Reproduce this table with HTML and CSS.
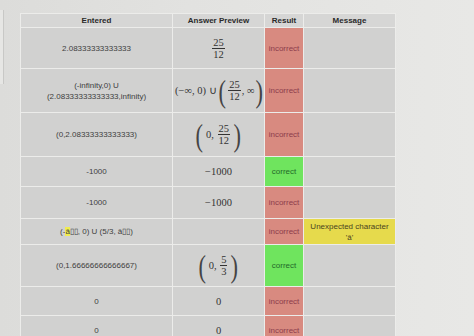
FILE: index.html
```html
<!DOCTYPE html>
<html>
<head>
<meta charset="utf-8">
<link rel="stylesheet" href="styles.css">
</head>
<body>
<div class="page">
  <div class="side-panel"></div>
  <table class="answers">
    <colgroup>
      <col class="c-entered"><col class="c-preview"><col class="c-result"><col class="c-message">
    </colgroup>
    <thead>
      <tr class="head"><th>Entered</th><th>Answer Preview</th><th>Result</th><th>Message</th></tr>
    </thead>
    <tbody>
      <tr class="r1">
        <td>2.08333333333333</td>
        <td class="math"><span class="frac"><span>25</span><span class="den">12</span></span></td>
        <td class="bad">incorrect</td><td></td>
      </tr>
      <tr class="r2">
        <td>(-infinity,0) U<br>(2.08333333333333,infinity)</td>
        <td class="math"><span class="row">(−∞, 0) ∪ <span class="big">(</span><span class="frac"><span>25</span><span class="den">12</span></span>, ∞<span class="big">)</span></span></td>
        <td class="bad">incorrect</td><td></td>
      </tr>
      <tr class="r3">
        <td>(0,2.08333333333333)</td>
        <td class="math"><span class="row"><span class="big">(</span>0,&nbsp;<span class="frac"><span>25</span><span class="den">12</span></span><span class="big">)</span></span></td>
        <td class="bad">incorrect</td><td></td>
      </tr>
      <tr class="r4">
        <td>-1000</td>
        <td class="math">−1000</td>
        <td class="good">correct</td><td></td>
      </tr>
      <tr class="r5">
        <td>-1000</td>
        <td class="math">−1000</td>
        <td class="bad">incorrect</td><td></td>
      </tr>
      <tr class="r6">
        <td>(-<span class="hl">â</span>▯▯, 0) U (5/3, â▯▯)</td>
        <td class="math"></td>
        <td class="bad">incorrect</td>
        <td class="warn">Unexpected character<br>'â'</td>
      </tr>
      <tr class="r7">
        <td>(0,1.66666666666667)</td>
        <td class="math"><span class="row"><span class="big">(</span>0,&nbsp;<span class="frac"><span>5</span><span class="den">3</span></span><span class="big">)</span></span></td>
        <td class="good">correct</td><td></td>
      </tr>
      <tr class="r8">
        <td>0</td>
        <td class="math">0</td>
        <td class="bad">incorrect</td><td></td>
      </tr>
      <tr class="r9">
        <td>0</td>
        <td class="math">0</td>
        <td class="bad">incorrect</td><td></td>
      </tr>
    </tbody>
  </table>
</div>
</body>
</html>
```
FILE: styles.css
```css
html, body {
  margin: 0;
  padding: 0;
  background: linear-gradient(90deg, #dcdcda 0%, #e2e2e0 40%, #e8e8e6 100%);
  height: 336px;
  overflow: hidden;
}
.page {
  display: flex;
  align-items: flex-start;
  padding-top: 13px;
}
.side-panel {
  width: 3px;
  height: 74px;
  margin-top: -3px;
  background: #e6e6e4;
  border-right: 1px solid #c8c8c6;
  flex: none;
}
.answers {
  margin-left: 16px;
  border-collapse: collapse;
  table-layout: fixed;
  width: 375px;
  font-family: "Liberation Sans", Arial, sans-serif;
  font-size: 8px;
  color: #3e3e3e;
  background: #d1d1d0;
}
.c-entered { width: 152px; }
.c-preview { width: 92px; }
.c-result { width: 39px; }
.c-message { width: 92px; }
.answers th, .answers td {
  border: 1.5px solid #ececea;
  text-align: center;
  vertical-align: middle;
  padding: 0 2px;
  line-height: 11px;
}
.answers th {
  font-weight: bold;
  color: #2a2a2a;
  height: 13px;
  background: #d6d6d5;
}
.r1 td { height: 40px; }
.r2 td { height: 43px; }
.r3 td { height: 43px; }
.r4 td { height: 29px; }
.r5 td { height: 31px; }
.r6 td { height: 25px; }
.r7 td { height: 41px; }
.r8 td { height: 28px; }
.r9 td { height: 28px; }
.math {
  font-family: "Liberation Serif", "Times New Roman", serif;
  font-size: 10.5px;
  color: #333;
}
.row {
  display: inline-flex;
  align-items: center;
  white-space: nowrap;
}
.frac {
  display: inline-flex;
  flex-direction: column;
  align-items: center;
  line-height: 11px;
  margin: 0 1px;
  vertical-align: middle;
}
.frac .den {
  border-top: 0.8px solid #333;
  padding: 0 1px;
}
.big {
  font-size: 32px;
  line-height: 32px;
  font-weight: 300;
  transform: scaleX(0.7);
  display: inline-block;
  color: #444;
}
.r3 .big, .r7 .big {
  margin: 0 1px;
}
.bad {
  background: #d88a80;
  color: #8c3d4c;
}
.good {
  background: #6fe45e;
  color: #23692a;
}
.warn {
  background: #e6da4c;
  color: #4a4420;
}
.hl {
  background: #f0ec50;
}
```
